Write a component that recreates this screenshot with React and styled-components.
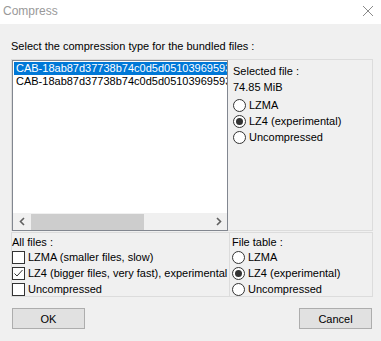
import React from "react";
import styled, { createGlobalStyle } from "styled-components";

const GlobalStyle = createGlobalStyle`
  html, body {
    margin: 0;
    padding: 0;
    background: #f0f0f0;
  }
  body {
    font-family: "Liberation Sans", Arial, sans-serif;
    font-size: 11px;
    color: #000;
  }
`;

const files = [
  "CAB-18ab87d37738b74c0d5d05103969593",
  "CAB-18ab87d37738b74c0d5d05103969593",
];

function Radio({ checked, children }) {
  return (
    <OptionRow>
      <RadioCircle>{checked && <RadioDot />}</RadioCircle>
      <OptionLabel>{children}</OptionLabel>
    </OptionRow>
  );
}

function Check({ checked, children }) {
  return (
    <OptionRow>
      <CheckBox>
        {checked && (
          <svg width="11" height="11" viewBox="0 0 11 11">
            <polyline
              points="1.5,5.5 4,8 9.5,2"
              fill="none"
              stroke="#333"
              strokeWidth="1"
            />
          </svg>
        )}
      </CheckBox>
      <CheckLabel>{children}</CheckLabel>
    </OptionRow>
  );
}

function App() {
  return (
    <>
      <GlobalStyle />
      <Window>
        <TitleBar>
          <Title>Compress</Title>
          <CloseIcon width="12" height="12" viewBox="0 0 12 12">
            <path d="M1 1 L11 11 M11 1 L1 11" stroke="#8a8a8a" strokeWidth="1" />
          </CloseIcon>
        </TitleBar>
        <Body>
          <Prompt>Select the compression type for the bundled files :</Prompt>
          <MainRow>
            <FileList>
              <Items>
                {files.map((f, i) => (
                  <Item key={i} selected={i === 0}>
                    {f}
                  </Item>
                ))}
              </Items>
              <HScroll>
                <ArrowButton>
                  <svg width="8" height="9" viewBox="0 0 8 9">
                    <polyline points="6,1 2.5,4.5 6,8" fill="none" stroke="#606060" strokeWidth="1.6" />
                  </svg>
                </ArrowButton>
                <Track>
                  <Thumb />
                </Track>
                <ArrowButton>
                  <svg width="8" height="9" viewBox="0 0 8 9">
                    <polyline points="2,1 5.5,4.5 2,8" fill="none" stroke="#606060" strokeWidth="1.6" />
                  </svg>
                </ArrowButton>
              </HScroll>
            </FileList>
            <SidePanel>
              <InfoLine>Selected file :</InfoLine>
              <InfoLine>74.85 MiB</InfoLine>
              <Options>
                <Radio>LZMA</Radio>
                <Radio checked>LZ4 (experimental)</Radio>
                <Radio>Uncompressed</Radio>
              </Options>
            </SidePanel>
          </MainRow>
          <BottomRow>
            <AllFiles>
              <GroupLabel>All files :</GroupLabel>
              <Check>LZMA (smaller files, slow)</Check>
              <Check checked>LZ4 (bigger files, very fast), experimental</Check>
              <Check>Uncompressed</Check>
            </AllFiles>
            <FileTable>
              <GroupLabel>File table :</GroupLabel>
              <Radio>LZMA</Radio>
              <Radio checked>LZ4 (experimental)</Radio>
              <Radio>Uncompressed</Radio>
            </FileTable>
          </BottomRow>
          <Buttons>
            <Button>OK</Button>
            <Button>Cancel</Button>
          </Buttons>
        </Body>
      </Window>
    </>
  );
}

export default App;

const Window = styled.div`
  width: 381px;
  height: 341px;
  background: #f0f0f0;
  overflow: hidden;
`;

const TitleBar = styled.div`
  height: 24px;
  background: #fff;
  display: flex;
  align-items: center;
  justify-content: space-between;
  padding: 0 7px 0 3px;
  box-sizing: border-box;
`;

const Title = styled.span`
  font-size: 12px;
  color: #999;
  margin-top: -2px;
`;

const CloseIcon = styled.svg`
  display: block;
  margin-top: -2px;
`;

const Body = styled.div`
  padding: 16px 8px 0 11px;
`;

const Prompt = styled.div`
  line-height: 13px;
  height: 13px;
`;

const MainRow = styled.div`
  margin-top: 6px;
  height: 172px;
  box-sizing: border-box;
  border: 1px solid #dcdcdc;
  display: flex;
`;

const FileList = styled.div`
  width: 216px;
  height: 171px;
  box-sizing: border-box;
  border: 1px solid #828790;
  background: #fff;
  display: flex;
  flex-direction: column;
  flex-shrink: 0;
`;

const Items = styled.div`
  flex: 1;
  padding: 1px 0 0 1px;
  overflow: hidden;
`;

const Item = styled.div`
  height: 13px;
  line-height: 13px;
  padding-left: 2px;
  white-space: nowrap;
  overflow: hidden;
  background: ${(p) => (p.selected ? "#0078d7" : "transparent")};
  color: ${(p) => (p.selected ? "#fff" : "#000")};
`;

const HScroll = styled.div`
  height: 17px;
  display: flex;
  background: #f0f0f0;
`;

const ArrowButton = styled.div`
  width: 17px;
  display: flex;
  align-items: center;
  justify-content: center;
`;

const Track = styled.div`
  flex: 1;
  display: flex;
  align-items: center;
`;

const Thumb = styled.div`
  width: 113px;
  height: 16px;
  margin-left: 1px;
  background: #cdcdcd;
`;

const SidePanel = styled.div`
  flex: 1;
  padding: 3px 0 0 5px;
`;

const InfoLine = styled.div`
  height: 16px;
  line-height: 16px;
`;

const Options = styled.div`
  margin-top: 2px;
`;

const OptionRow = styled.div`
  height: 16px;
  display: flex;
  align-items: center;
  white-space: nowrap;
`;

const RadioCircle = styled.span`
  width: 13px;
  height: 13px;
  box-sizing: border-box;
  border: 1px solid #333;
  border-radius: 50%;
  background: #fff;
  display: flex;
  align-items: center;
  justify-content: center;
  flex-shrink: 0;
`;

const RadioDot = styled.span`
  width: 7px;
  height: 7px;
  border-radius: 50%;
  background: #333;
`;

const OptionLabel = styled.span`
  margin-left: 3px;
  line-height: 13px;
`;

const CheckBox = styled.span`
  width: 13px;
  height: 13px;
  box-sizing: border-box;
  border: 1px solid #333;
  background: #fff;
  display: flex;
  align-items: center;
  justify-content: center;
  flex-shrink: 0;
`;

const CheckLabel = styled.span`
  margin-left: 3px;
  line-height: 13px;
`;

const BottomRow = styled.div`
  margin-top: 1px;
  height: 65px;
  box-sizing: border-box;
  border: 1px solid #dcdcdc;
  display: flex;
`;

const AllFiles = styled.div`
  width: 218px;
  box-sizing: border-box;
  border-right: 1px solid #dcdcdc;
  padding-top: 3px;
`;

const FileTable = styled.div`
  flex: 1;
  padding: 3px 0 0 2px;
`;

const GroupLabel = styled.div`
  height: 13px;
  line-height: 13px;
`;

const Buttons = styled.div`
  margin-top: 11px;
  padding: 0 1px;
  display: flex;
  justify-content: space-between;
`;

const Button = styled.button`
  width: 73px;
  height: 21px;
  box-sizing: border-box;
  border: 1px solid #adadad;
  background: #e1e1e1;
  font-family: inherit;
  font-size: 11px;
  color: #000;
  padding: 0;
`;
